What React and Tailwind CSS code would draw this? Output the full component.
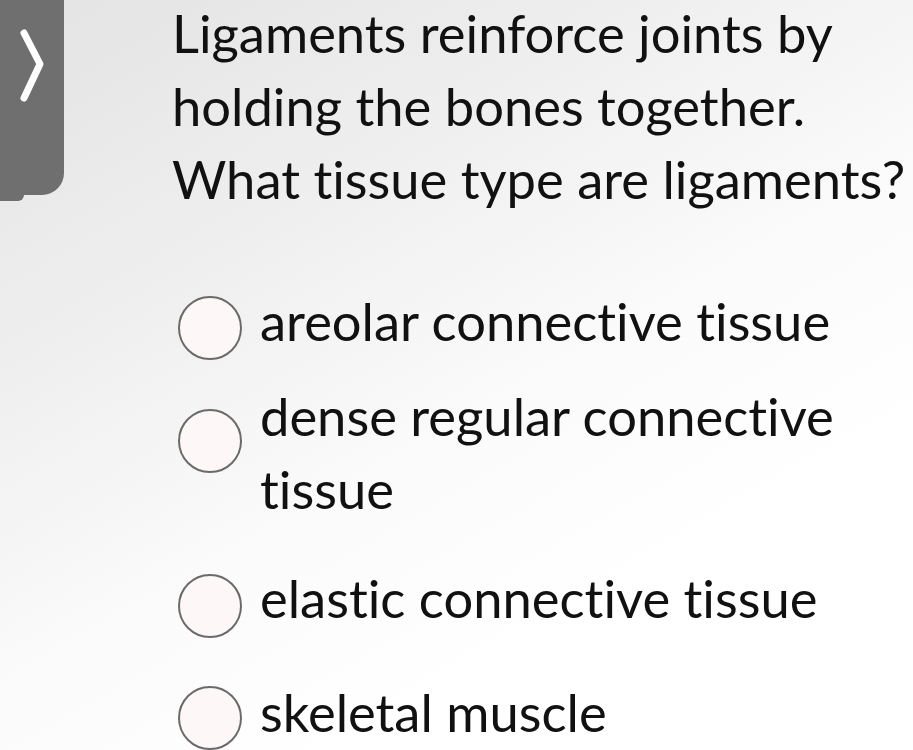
const options = [
  { text: 'areolar connective tissue', rowClass: 'mt-[69px]', dotClass: 'mt-[12px]' },
  { text: 'dense regular connective tissue', rowClass: 'mt-[19px]', dotClass: 'mt-[30px]' },
  { text: 'elastic connective tissue', rowClass: 'mt-[36px]', dotClass: 'mt-[13px]' },
  { text: 'skeletal muscle', rowClass: 'mt-[37px]', dotClass: 'mt-[11px]' },
];

const Chevron = () => (
  <svg width="30" height="80" viewBox="0 0 30 80" fill="none">
    <path d="M9 5 L25 36 L9 70" stroke="#ffffff" strokeWidth="7" strokeLinecap="round" strokeLinejoin="round" />
  </svg>
);

export default function App() {
  return (
    <div className="relative w-[913px] h-[750px] overflow-hidden bg-[linear-gradient(150deg,#e3e3e3_0%,#efefef_30%,#fbfbfb_55%,#ffffff_75%)] font-['Lato','Open_Sans',sans-serif] [font-variant-ligatures:none] text-[#111111]">
      <div className="flex">
        <div className="shrink-0 flex flex-col">
          <div className="w-[64px] h-[195px] bg-[#6f6f6f] rounded-br-[22px] pt-[28px] pl-[15px]">
            <Chevron />
          </div>
          <div className="w-[24px] h-[6px] bg-[#6f6f6f] rounded-br-[6px]" />
        </div>

        <div className="ml-[108px] flex-1">
          <h1 className="mt-[-4px] text-[52.5px] leading-[73px] font-normal">
            Ligaments reinforce joints by holding the bones together. What tissue type are ligaments?
          </h1>

          <div className="pl-[6px]">
            {options.map((opt) => (
              <label key={opt.text} className={`flex items-start gap-[18px] ${opt.rowClass}`}>
                <span className={`shrink-0 w-[64px] h-[64px] rounded-full border-[2.5px] border-[#6a6a6a] bg-[#fdf8f7] ${opt.dotClass}`} />
                <span className="flex-1 text-[52.5px] leading-[73px]">{opt.text}</span>
              </label>
            ))}
          </div>
        </div>
      </div>
    </div>
  );
}
